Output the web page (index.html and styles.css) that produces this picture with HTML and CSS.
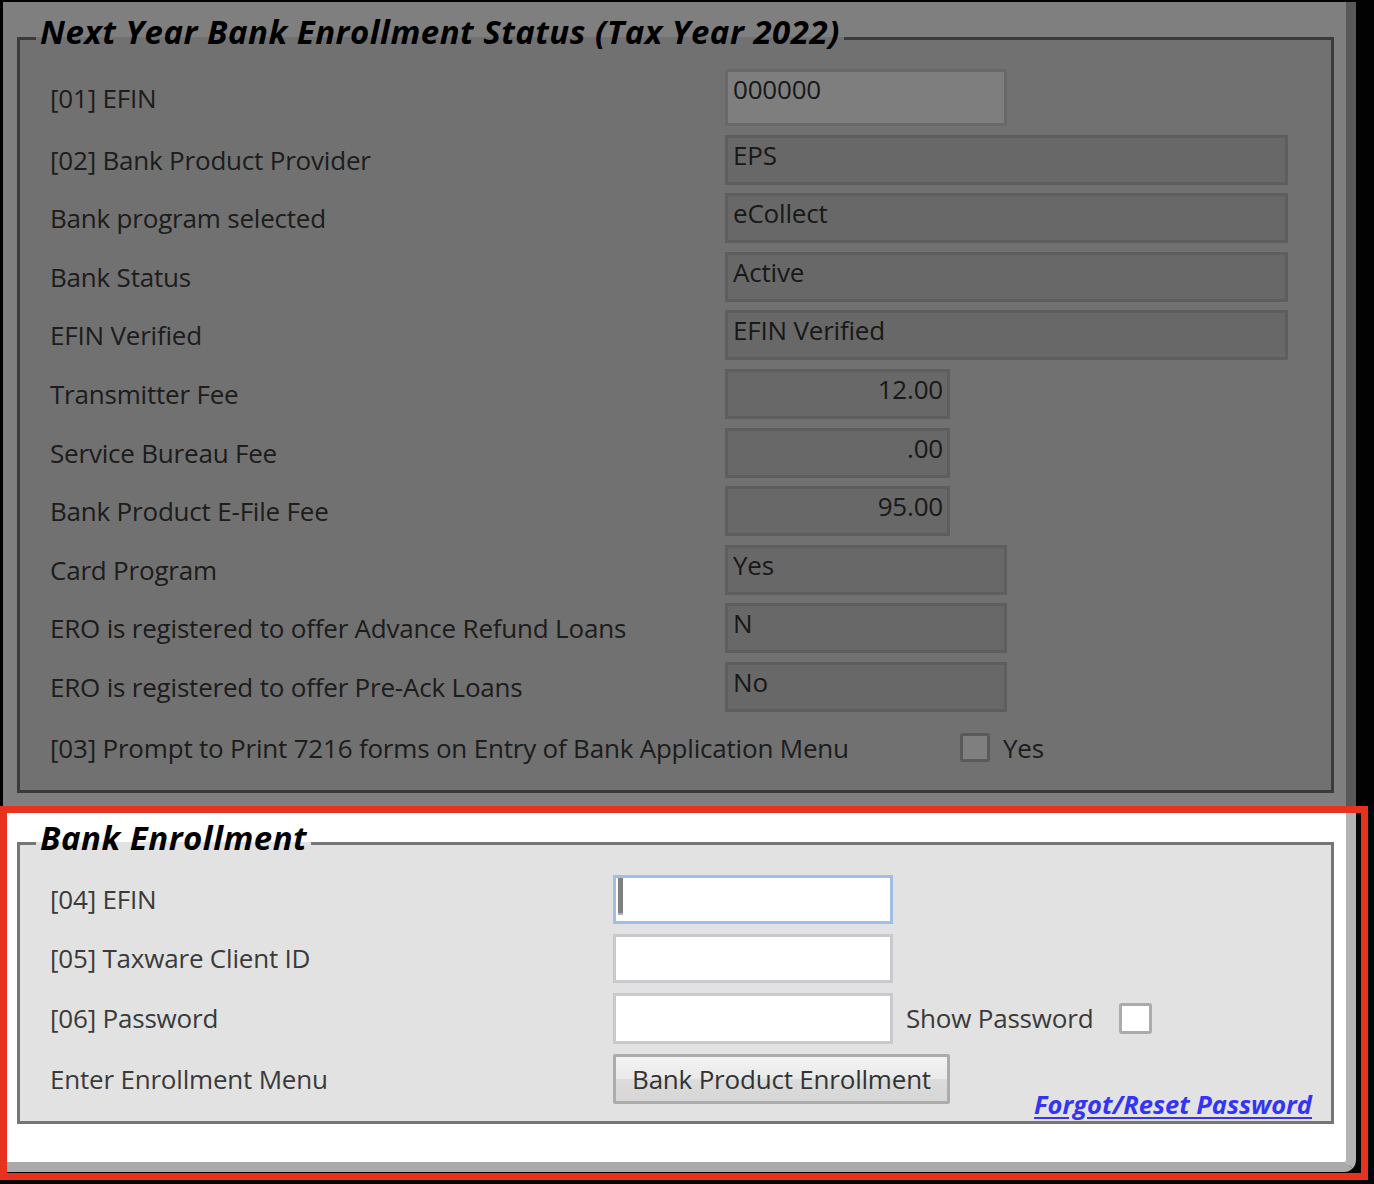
FILE: index.html
```html
<!DOCTYPE html>
<html lang="en">
<head>
<meta charset="utf-8">
<title>Bank Enrollment</title>
<link rel="stylesheet" href="styles.css">
</head>
<body>
<div class="screen">
  <div class="window">
    <fieldset class="group group-status">
      <legend>Next Year Bank Enrollment Status (Tax Year 2022)</legend>
      <div class="status-grid">
        <div class="label">[01] EFIN</div>
        <div class="field field-light w-mid tall">000000</div>
        <div class="label">[02] Bank Product Provider</div>
        <div class="field w-long">EPS</div>
        <div class="label">Bank program selected</div>
        <div class="field w-long">eCollect</div>
        <div class="label">Bank Status</div>
        <div class="field w-long">Active</div>
        <div class="label">EFIN Verified</div>
        <div class="field w-long">EFIN Verified</div>
        <div class="label">Transmitter Fee</div>
        <div class="field w-short num">12.00</div>
        <div class="label">Service Bureau Fee</div>
        <div class="field w-short num">.00</div>
        <div class="label">Bank Product E-File Fee</div>
        <div class="field w-short num">95.00</div>
        <div class="label">Card Program</div>
        <div class="field w-mid">Yes</div>
        <div class="label">ERO is registered to offer Advance Refund Loans</div>
        <div class="field w-mid">N</div>
        <div class="label">ERO is registered to offer Pre-Ack Loans</div>
        <div class="field w-mid">No</div>
      </div>
      <div class="prompt-row">
        <span class="label prompt-label">[03] Prompt to Print 7216 forms on Entry of Bank Application Menu</span>
        <span class="check"></span>
        <span class="label">Yes</span>
      </div>
    </fieldset>

    <fieldset class="group group-enroll">
      <legend>Bank Enrollment</legend>
      <div class="enroll-grid">
        <div class="label">[04] EFIN</div>
        <div class="cell"><div class="input focused h49"><span class="caret"></span></div></div>
        <div class="label">[05] Taxware Client ID</div>
        <div class="cell"><div class="input h49"></div></div>
        <div class="label">[06] Password</div>
        <div class="cell pw-cell">
          <div class="input h51"></div>
          <span class="label show-pw">Show Password</span>
          <span class="check check-white"></span>
        </div>
        <div class="label">Enter Enrollment Menu</div>
        <div class="cell btn-cell">
          <button class="btn" type="button">Bank Product Enrollment</button>
          <a class="link" href="#">Forgot/Reset Password</a>
        </div>
      </div>
    </fieldset>
  </div>
  <div class="dim"></div>
  <div class="highlight"></div>
</div>
</body>
</html>
```

FILE: styles.css
```css
* { box-sizing: border-box; }

html, body {
  margin: 0;
  padding: 0;
  background: #050505;
}

.screen {
  position: relative;
  width: 1374px;
  height: 1184px;
  overflow: hidden;
  background: #050505;
  padding: 2px 0 0 3px;
  font-family: "Open Sans", "Noto Sans", sans-serif;
  color: #333;
}

.window {
  width: 1353px;
  height: 1170px;
  background: #ffffff;
  border-right: 10px solid #b3b3b3;
  border-bottom: 10px solid #aaaaaa;
  border-bottom-right-radius: 12px;
  padding-left: 14px;
  overflow: hidden;
}

.group {
  width: 1317px;
  margin: 0;
  padding: 0 0 0 30px;
  border: 3px solid #767676;
  background: #e2e2e2;
  min-inline-size: 0;
}

.group legend {
  margin-left: -14px;
  padding: 0 4px 12px 4px;
  font-size: 33px;
  line-height: 36px;
  font-weight: 700;
  font-style: italic;
  letter-spacing: 0.5px;
  color: #000;
}

.group-status {
  margin-top: 12px;
  padding-bottom: 28px;
}

.group-enroll {
  margin-top: 27px;
  padding-bottom: 17px;
}

.label {
  font-size: 26px;
  line-height: 32px;
  color: #3a3a3a;
  white-space: nowrap;
  letter-spacing: -0.2px;
}

.status-grid {
  display: grid;
  grid-template-columns: 675px auto;
  grid-template-rows: 57px;
  grid-auto-rows: 50px;
  row-gap: 8.6px;
  align-items: center;
  padding-top: 7px;
}

.field {
  height: 50px;
  border: 3px solid #bdbdbd;
  background: #d0d0d0;
  padding: 1px 6px 0 5px;
  font-size: 26px;
  line-height: 32px;
  color: #333;
  letter-spacing: -0.2px;
  white-space: nowrap;
}

.field.tall { height: 57px; }
.field-light { background: #fdfdfd; border-color: #d3d3d3; }
.w-long { width: 563px; }
.w-mid { width: 282px; }
.w-short { width: 225px; }
.num { text-align: right; padding-right: 4px; }

.prompt-row {
  display: flex;
  align-items: center;
  height: 28px;
  margin-top: 22px;
}

.prompt-label { width: 910px; }

.check {
  width: 30px;
  height: 29px;
  border: 3px solid #b4b4b4;
  border-radius: 3px;
  background: #ffffff;
  margin-right: 13px;
  flex: none;
}

.enroll-grid {
  display: grid;
  grid-template-columns: 563px 1fr;
  grid-template-rows: 49px 49px 51px 50px;
  row-gap: 10px;
  align-items: center;
  padding-top: 7px;
}

.cell { height: 100%; display: flex; align-items: center; }

.input {
  width: 280px;
  background: #ffffff;
  border: 3px solid #c9c9cd;
  position: relative;
}
.h49 { height: 49px; }
.h51 { height: 51px; }

.input.focused { border-color: #9fbee8; }

.caret {
  position: absolute;
  left: 2px;
  top: 0;
  width: 5px;
  height: 37px;
  background: #808080;
  border-bottom: 2px solid #b0b0b0;
}

.show-pw { margin-left: 13px; }

.check-white {
  width: 33px;
  height: 31px;
  margin-left: 26px;
  border-color: #ababab;
}

.btn-cell {
  justify-content: space-between;
  padding-right: 19px;
}

.btn {
  width: 337px;
  height: 50px;
  border: 3px solid #acacac;
  border-radius: 2px;
  background: linear-gradient(#f3f3f3, #e9e9e9 50%, #dcdcdc 51%, #d6d6d6);
  font-family: "Open Sans", "Noto Sans", sans-serif;
  font-size: 26px;
  line-height: 32px;
  letter-spacing: -0.2px;
  color: #333;
  padding: 0;
  margin: 0;
}

.link {
  align-self: flex-end;
  margin-bottom: -16px;
  font-size: 25.5px;
  line-height: 32px;
  font-weight: 700;
  font-style: italic;
  color: #3434f4;
  text-decoration: underline;
  text-underline-offset: 3px;
}

.dim {
  position: absolute;
  left: 0;
  top: 0;
  width: 1374px;
  height: 806px;
  background: rgba(0, 0, 0, 0.5);
}

.highlight {
  position: absolute;
  left: 0;
  top: 806px;
  width: 1368px;
  height: 374px;
  border: 7px solid #e8321e;
}
```
